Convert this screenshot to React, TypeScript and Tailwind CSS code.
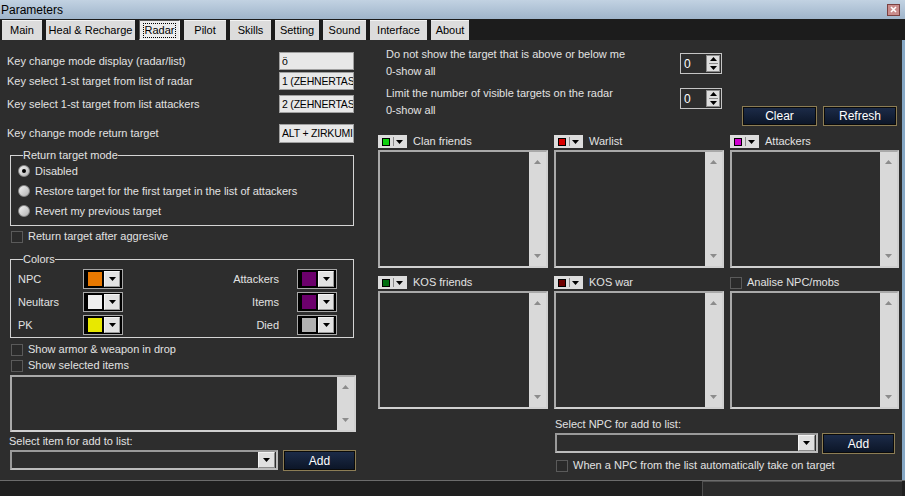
import React from 'react';

const tabs = [
  { name: 'Main', w: 'w-[40px]' },
  { name: 'Heal & Recharge', w: 'w-[89px]' },
  { name: 'Radar', w: 'w-[41px]', active: true },
  { name: 'Pilot', w: 'w-[42px]' },
  { name: 'Skills', w: 'w-[41px]' },
  { name: 'Setting', w: 'w-[44px]' },
  { name: 'Sound', w: 'w-[43px]' },
  { name: 'Interface', w: 'w-[57px]' },
  { name: 'About', w: 'w-[38px]' },
];

function Checkbox({ label }: { label: string }) {
  return (
    <div className="flex items-center gap-[5px] h-[13px]">
      <div className="w-[12px] h-[12px] border border-[#5a5a5a] bg-[#2a2a2a]" />
      <span>{label}</span>
    </div>
  );
}

function Radio({ label, checked }: { label: string; checked?: boolean }) {
  return (
    <div className="flex items-center gap-[5px] h-[20px]">
      <div className="w-[12px] h-[12px] rounded-full border border-[#8a8a8a] bg-gradient-to-br from-[#f4f4f4] to-[#b4b4b4] flex items-center justify-center">
        {checked && <div className="w-[4px] h-[4px] rounded-full bg-black" />}
      </div>
      <span>{label}</span>
    </div>
  );
}

function DownArrow({ color = '#000' }: { color?: string }) {
  return (
    <svg width="7" height="4" viewBox="0 0 7 4">
      <path d="M0 0h7L3.5 4z" fill={color} />
    </svg>
  );
}

function UpArrow({ color = '#000' }: { color?: string }) {
  return (
    <svg width="7" height="4" viewBox="0 0 7 4">
      <path d="M0 4h7L3.5 0z" fill={color} />
    </svg>
  );
}

function ColorPick({ color }: { color: string }) {
  return (
    <div className="w-[40px] h-[20px] border border-[#a8a8a8] bg-black flex items-center p-[2px] gap-[2px]">
      <div className="w-[14px] h-[14px] ml-[2px]" style={{ backgroundColor: color }} />
      <div className="ml-auto w-[16px] h-[16px] bg-[#e2e2e2] border border-[#f4f4f4] border-b-[#9a9a9a] border-r-[#9a9a9a] flex items-center justify-center">
        <DownArrow />
      </div>
    </div>
  );
}

function SmallColor({ color }: { color: string }) {
  return (
    <div className="w-[29px] h-[13px] bg-[#dcdcdc] flex items-center px-[4px]">
      <div className="w-[12px] h-[8px] border border-black" style={{ backgroundColor: color }} />
      <div className="w-px h-[9px] bg-[#8a8a8a] ml-[3px]" />
      <div className="ml-[2px] flex items-center">
        <DownArrow />
      </div>
    </div>
  );
}

function ListBox({ className }: { className: string }) {
  return (
    <div className={`${className} border-2 border-[#a9a9a9] border-b-[#d0d0d0] border-r-[#d0d0d0] bg-[#2d2d2d] flex`}>
      <div className="flex-1" />
      <div className="w-[17px] bg-[#d9d9d9] flex flex-col items-center justify-between py-[8px]">
        <UpArrow color="#8c8c8c" />
        <DownArrow color="#8c8c8c" />
      </div>
    </div>
  );
}

function NavButton({ label, className }: { label: string; className: string }) {
  return (
    <div className={`${className} border border-[#8c7d55] p-px bg-[#0a0a0a]`}>
      <div className="h-full w-full bg-gradient-to-b from-[#1c2b48] to-[#0c1628] flex items-center justify-center text-[12px] text-white">
        {label}
      </div>
    </div>
  );
}

function SpinBox() {
  return (
    <div className="w-[42px] h-[21px] border border-[#c4c4c4] bg-[#2d2d2d] flex items-center">
      <span className="pl-[3px] flex-1 text-[12px] text-white">0</span>
      <div className="w-[14px] h-[17px] mr-[1px] bg-[#dedede] border border-[#8a8a8a] flex flex-col items-center justify-center gap-[2px]">
        <UpArrow />
        <div className="w-[9px] h-px bg-[#8a8a8a]" />
        <DownArrow />
      </div>
    </div>
  );
}

function Combo({ className }: { className: string }) {
  return (
    <div className={`${className} h-[20px] border-2 border-[#bcbcbc] border-t-[#9a9a9a] border-l-[#9a9a9a] bg-[#2d2d2d] flex justify-end items-center pr-px`}>
      <div className="w-[17px] h-[16px] bg-[#e0e0e0] border border-[#f4f4f4] border-b-[#8a8a8a] border-r-[#8a8a8a] flex items-center justify-center">
        <DownArrow />
      </div>
    </div>
  );
}

function KeyInput({ value, className }: { value: string; className: string }) {
  return (
    <div className={`${className} w-[75px] border border-[#a0a0a0] bg-[#e8e8e8] text-black overflow-hidden whitespace-nowrap pl-[2px] leading-[16px] text-[10.5px] tracking-[-0.2px]`}>
      {value}
    </div>
  );
}

function KeyRow({ label, value, className }: { label: string; value: string; className: string }) {
  return (
    <div className={`${className} flex items-center justify-between pl-[7px] pr-[16px]`}>
      <span>{label}</span>
      <KeyInput value={value} className="h-full" />
    </div>
  );
}

function ColorRow({ left, leftColor, right, rightColor }: { left: string; leftColor: string; right: string; rightColor: string }) {
  return (
    <div className="flex items-center h-[20px]">
      <span className="w-[65px]">{left}</span>
      <ColorPick color={leftColor} />
      <span className="flex-1 text-right pr-[18px]">{right}</span>
      <ColorPick color={rightColor} />
    </div>
  );
}

function ListColumn({ width, header }: { width: string; header: React.ReactNode }) {
  return (
    <div className={`${width} flex flex-col`}>
      <div className="h-[13px] flex items-center gap-[6px]">{header}</div>
      <ListBox className="mt-[2px] h-[118px]" />
    </div>
  );
}

export default function App() {
  return (
    <div className="w-[905px] h-[496px] overflow-hidden flex flex-col bg-[#2d2d2d] text-[#e2e2e2] text-[11px] font-['Liberation_Sans',_Tahoma,_sans-serif]">
      {/* title bar */}
      <div className="h-[19px] shrink-0 bg-gradient-to-b from-[#c2d2e2] to-[#9fb5cb] flex items-center justify-between pl-[1px] pr-[5px] text-black text-[12px]">
        <span>Parameters</span>
        <div className="w-[13px] h-[12px] bg-[#c98c8c] border border-[#7a4040] flex items-center justify-center">
          <svg width="7" height="7" viewBox="0 0 7 7">
            <path d="M1 1l5 5M6 1l-5 5" stroke="#fff" strokeWidth="1.6" />
          </svg>
        </div>
      </div>

      {/* tabs */}
      <div className="h-[21px] shrink-0 bg-[#1c1c1c] flex items-stretch gap-[4px] pl-[2px] text-black text-[11px] whitespace-nowrap">
        {tabs.map(t =>
          t.active ? (
            <div key={t.name} className={`${t.w} bg-[#ececec] border border-[#5a5a5a] border-b-[#f8f8f8] border-r-[#f8f8f8] flex items-center justify-center mt-[1px]`}>
              <span className="border border-dotted border-black px-px leading-[13px]">{t.name}</span>
            </div>
          ) : (
            <div key={t.name} className={`${t.w} bg-[#dcdcdc] border-t border-[#f4f4f4] flex items-center justify-center mt-[1px]`}>
              {t.name}
            </div>
          )
        )}
      </div>

      {/* content */}
      <div className="flex-1 flex border-r-[3px] border-[#86a8c6] min-h-0">
        {/* left */}
        <div className="w-[370px] shrink-0 flex flex-col">
          <KeyRow className="mt-[12px] h-[18px]" label="Key change mode display (radar/list)" value="ö" />
          <KeyRow className="mt-[2px] h-[18px]" label="Key select 1-st target from list of radar" value="1 (ZEHNERTAS" />
          <KeyRow className="mt-[5px] h-[18px]" label="Key select 1-st target from list attackers" value="2 (ZEHNERTAS" />
          <KeyRow className="mt-[11px] h-[19px]" label="Key change mode return target" value="ALT + ZIRKUMI" />

          <fieldset className="mt-[6px] ml-[10px] w-[344px] border border-[#d4d4d4] pl-[7px] pb-[4px]">
            <legend className="ml-[5px] leading-[12px]">Return target mode</legend>
            <Radio label="Disabled" checked />
            <Radio label="Restore target for the first target in the list of attackers" />
            <Radio label="Revert my previous target" />
          </fieldset>

          <div className="mt-[4px] ml-[11px]">
            <Checkbox label="Return target after aggresive" />
          </div>

          <fieldset className="mt-[10px] ml-[10px] w-[344px] border border-[#d4d4d4] pl-[7px] pr-[16px] pb-[2px]">
            <legend className="ml-[5px] leading-[12px]">Colors</legend>
            <div className="mt-[4px] flex flex-col gap-[3px]">
              <ColorRow left="NPC" leftColor="#e87800" right="Attackers" rightColor="#6c006c" />
              <ColorRow left="Neultars" leftColor="#eeeeee" right="Items" rightColor="#6c006c" />
              <ColorRow left="PK" leftColor="#e8e800" right="Died" rightColor="#b2b2b2" />
            </div>
          </fieldset>

          <div className="mt-[5px] ml-[11px] flex flex-col gap-[3px]">
            <Checkbox label="Show armor & weapon in drop" />
            <Checkbox label="Show selected items" />
          </div>

          <ListBox className="mt-[3px] ml-[10px] w-[346px] h-[57px]" />

          <div className="mt-[3px] ml-[9px] leading-[12px]">Select item for add to list:</div>
          <div className="mt-[3px] ml-[10px] flex gap-[5px]">
            <Combo className="w-[268px]" />
            <NavButton label="Add" className="w-[73px] h-[21px]" />
          </div>
        </div>

        {/* right */}
        <div className="flex-1 flex flex-col">
          <div className="mt-[6px] flex items-start">
            <div className="w-[310px] pl-[16px] leading-[17px]">
              <div>Do not show the target that is above or below me</div>
              <div>0-show all</div>
            </div>
            <div className="mt-[7px]">
              <SpinBox />
            </div>
          </div>
          <div className="mt-[5px] flex items-start">
            <div className="w-[310px] pl-[16px] leading-[17px]">
              <div>Limit the number of visible targets on the radar</div>
              <div>0-show all</div>
            </div>
            <div className="mt-[3px]">
              <SpinBox />
            </div>
            <div className="mt-[21px] ml-[20px] flex gap-[6px]">
              <NavButton label="Clear" className="w-[75px] h-[20px]" />
              <NavButton label="Refresh" className="w-[74px] h-[20px]" />
            </div>
          </div>

          <div className="mt-[9px] ml-[8px] flex gap-[6px]">
            <ListColumn
              width="w-[170px]"
              header={
                <>
                  <SmallColor color="#10d010" />
                  <span>Clan friends</span>
                </>
              }
            />
            <ListColumn
              width="w-[170px]"
              header={
                <>
                  <SmallColor color="#d80000" />
                  <span>Warlist</span>
                </>
              }
            />
            <ListColumn
              width="w-[169px]"
              header={
                <>
                  <SmallColor color="#d000d0" />
                  <span>Attackers</span>
                </>
              }
            />
          </div>

          <div className="mt-[8px] ml-[8px] flex gap-[6px]">
            <ListColumn
              width="w-[170px]"
              header={
                <>
                  <SmallColor color="#006e10" />
                  <span>KOS friends</span>
                </>
              }
            />
            <ListColumn
              width="w-[170px]"
              header={
                <>
                  <SmallColor color="#6e0000" />
                  <span>KOS war</span>
                </>
              }
            />
            <ListColumn width="w-[169px]" header={<Checkbox label="Analise NPC/mobs" />} />
          </div>

          <div className="ml-[185px] flex flex-col">
            <div className="mt-[8px] leading-[14px]">Select NPC for add to list:</div>
            <div className="mt-[2px] flex gap-[4px]">
              <Combo className="w-[263px]" />
              <NavButton label="Add" className="w-[73px] h-[21px]" />
            </div>
            <div className="mt-[5px] ml-[1px]">
              <Checkbox label="When a NPC from the list automatically take on target" />
            </div>
          </div>
        </div>
      </div>

      {/* footer */}
      <div className="h-[16px] shrink-0 border-t border-[#6c6c6c] bg-[#1f1f1f] flex justify-end pr-[3px]">
        <div className="w-[200px] bg-[#2b2b2b] border-l border-t border-[#505050]" />
      </div>
    </div>
  );
}
